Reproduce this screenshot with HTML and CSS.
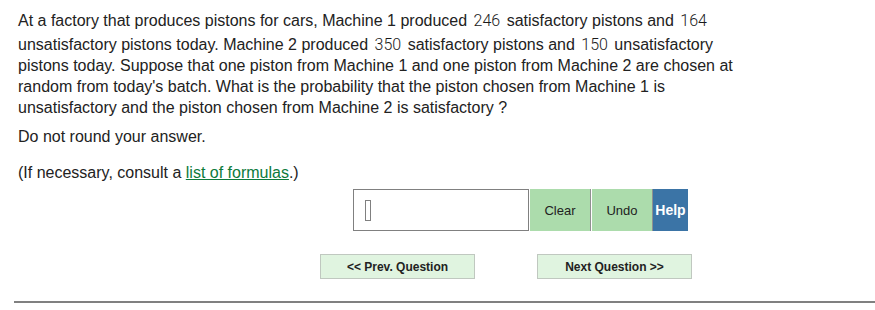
FILE: index.html
```html
<!DOCTYPE html>
<html>
<head>
<meta charset="utf-8">
<link rel="stylesheet" href="styles.css">
</head>
<body>
<div class="page">
  <p class="question">At a factory that produces pistons for cars, Machine 1 produced <span class="num">246</span> satisfactory pistons and <span class="num">164</span> unsatisfactory pistons today. Machine 2 produced <span class="num">350</span> satisfactory pistons and <span class="num">150</span> unsatisfactory pistons today. Suppose that one piston from Machine 1 and one piston from Machine 2 are chosen at random from today's batch. What is the probability that the piston chosen from Machine 1 is unsatisfactory and the piston chosen from Machine 2 is satisfactory ?</p>
  <p class="note first">Do not round your answer.</p>
  <p class="note">(If necessary, consult a <a class="link" href="#">list of formulas</a>.)</p>
  <div class="answer-row">
    <div class="answer-box"><span class="caret"></span></div>
    <button class="btn-green">Clear</button>
    <button class="btn-green">Undo</button>
    <button class="btn-help">Help</button>
  </div>
  <div class="nav-row">
    <button class="btn-nav">&lt;&lt; Prev. Question</button>
    <button class="btn-nav">Next Question &gt;&gt;</button>
  </div>
  <div class="rule"></div>
</div>
</body>
</html>
```
FILE: styles.css
```css
html, body {
  margin: 0;
  padding: 0;
  background: #ffffff;
}
.page {
  padding: 0 0 0 14px;
  font-family: "Liberation Sans", Arial, sans-serif;
  color: #222222;
}
.question {
  margin: 0;
  padding: 7px 128px 0 4px;
  font-size: 16px;
  line-height: 21px;
}
.num {
  font-family: Roboto, "Liberation Sans", sans-serif;
  font-weight: 300;
  font-size: 16px;
  color: #1a1a1a;
  display: inline-block;
  line-height: 21px;
  padding: 3px 2px 0;
  vertical-align: baseline;
}
.note {
  margin: 15px 0 0 4px;
  font-size: 16px;
  line-height: 21px;
}
.note.first {
  margin-top: 8px;
}
.link {
  color: #0b7a3b;
  text-decoration: underline;
}
.answer-row {
  display: flex;
  margin: 6px 0 0 339px;
  height: 42px;
}
.answer-box {
  box-sizing: border-box;
  width: 176px;
  height: 42px;
  border: 1px solid #808080;
  padding: 10px 0 0 11px;
}
.caret {
  display: block;
  box-sizing: border-box;
  width: 6px;
  height: 21px;
  border: 1px solid #808080;
}
.btn-green {
  box-sizing: border-box;
  width: 62px;
  height: 42px;
  background: #acdcac;
  border: none;
  border-right: 1px solid #909090;
  border-left: 1px solid #ffffff;
  font-family: "Liberation Sans", Arial, sans-serif;
  font-size: 13px;
  color: #222222;
  padding: 0;
}
.btn-help {
  box-sizing: border-box;
  width: 35px;
  height: 42px;
  background: #3b74a6;
  border: none;
  font-family: "Liberation Sans", Arial, sans-serif;
  font-size: 14px;
  font-weight: bold;
  color: #ffffff;
  padding: 0;
}
.nav-row {
  display: flex;
  gap: 62px;
  margin: 23px 0 0 306px;
}
.btn-nav {
  box-sizing: border-box;
  width: 155px;
  height: 25px;
  background: #e0f4e0;
  border: 1px solid #c0c8c0;
  font-family: "Liberation Sans", Arial, sans-serif;
  font-size: 12px;
  font-weight: bold;
  color: #222222;
  padding: 0;
}
.rule {
  margin-top: 22px;
  height: 2px;
  background: #808080;
}
```
